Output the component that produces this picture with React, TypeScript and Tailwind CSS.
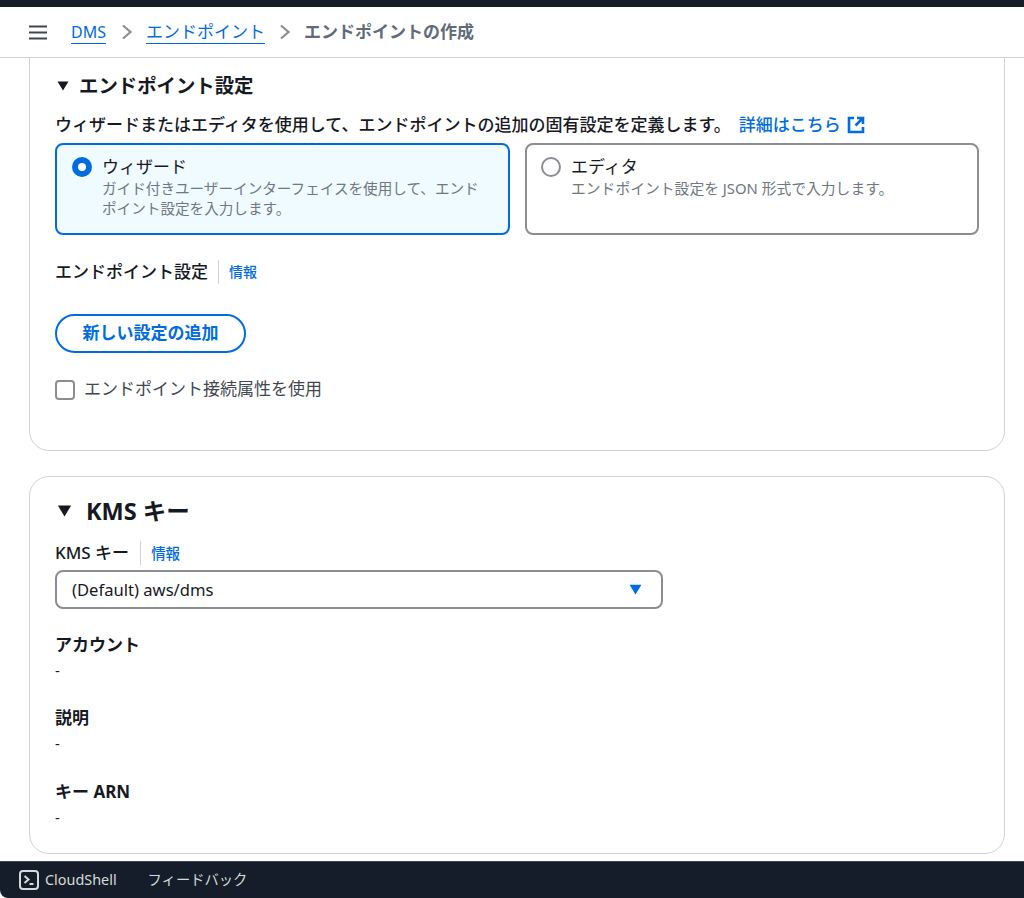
import React from "react";

const FONT = "font-['Noto_Sans','Noto_Sans_CJK_JP',sans-serif]";

function Caret({ className }: { className: string }) {
  return (
    <svg viewBox="0 0 12 10" className={className} fill="currentColor" aria-hidden="true">
      <path d="M0.5 0.5h11L6 9.5z" />
    </svg>
  );
}

function Chevron() {
  return (
    <svg viewBox="0 0 12 16" className="w-[12px] h-[16px] text-[#8c8c94]" fill="none" stroke="currentColor" strokeWidth="2.2" aria-hidden="true">
      <path d="M2 1.5l7.5 6.5L2 14.5" />
    </svg>
  );
}

function Field({ label, mt }: { label: string; mt: string }) {
  return (
    <div className={mt}>
      <div className="text-[17px] leading-[20px] font-bold text-[#16191f]">{label}</div>
      <div className="mt-[5px] text-[15px] leading-[20px] text-[#16191f]">-</div>
    </div>
  );
}

export default function App() {
  return (
    <div className={`${FONT} h-screen w-full flex flex-col overflow-hidden bg-white text-[#16191f]`}>
      <div className="h-[7px] shrink-0 bg-[#161d2a]" />
      <header className="h-[51px] shrink-0 flex items-center bg-white border-b border-[#d0d1d6] pl-[29px]">
        <svg viewBox="0 0 18 15" className="w-[18px] h-[15px] text-[#414750]" fill="none" stroke="currentColor" strokeWidth="2.2" aria-hidden="true">
          <path d="M0 1.5h18M0 7.5h18M0 13.5h18" />
        </svg>
        <a className="ml-[24px] text-[16px] leading-[22px] text-[#006ce0] border-b border-[#006ce0]">DMS</a>
        <span className="ml-[15px] mr-[13px] flex"><Chevron /></span>
        <a className="text-[17px] leading-[22px] text-[#006ce0] border-b border-[#006ce0]">エンドポイント</a>
        <span className="ml-[14px] mr-[13px] flex"><Chevron /></span>
        <span className="text-[17px] leading-[22px] font-bold text-[#5f6b7a]">エンドポイントの作成</span>
      </header>

      <main className="flex-1 min-h-0 overflow-hidden bg-white pl-[29px] pr-[19px]">
        <section className="-mt-[30px] h-[423px] border border-[#d0d1d6] rounded-[20px] px-[25px] pt-[45px]">
          <div className="flex items-center">
            <Caret className="ml-[2px] w-[12px] h-[10px] text-[#16191f]" />
            <h2 className="ml-[10px] text-[19.4px] leading-[24px] font-bold">エンドポイント設定</h2>
          </div>
          <p className="mt-[15px] text-[17px] leading-[24px] font-medium flex items-center whitespace-nowrap">
            <span>ウィザードまたはエディタを使用して、エンドポイントの追加の固有設定を定義します。</span>
            <a className="ml-[8px] font-medium text-[#006ce0]">詳細はこちら</a>
            <svg viewBox="0 0 18 18" className="ml-[6px] w-[18px] h-[18px] text-[#006ce0]" fill="none" stroke="currentColor" strokeWidth="2.6" aria-hidden="true">
              <path d="M7 2H2v14h14v-5M10 2h6v6M16 2L8.5 9.5" />
            </svg>
          </p>
          <div className="mt-[6px] flex gap-[15px]">
            <div className="w-[455px] h-[92px] shrink-0 flex rounded-[8px] border-2 border-[#006ce0] bg-[#f0fbff] pl-[15px] pt-[12px]">
              <span className="w-[20px] h-[20px] shrink-0 rounded-full border-[6px] border-[#006ce0] bg-white" />
              <div className="ml-[10px]">
                <div className="text-[17px] leading-[20px] text-[#16191f]">ウィザード</div>
                <div className="mt-[1px] w-[390px] text-[14.6px] leading-[20px] text-[#6f7780]">ガイド付きユーザーインターフェイスを使用して、エンドポイント設定を入力します。</div>
              </div>
            </div>
            <div className="flex-1 h-[92px] flex rounded-[8px] border-2 border-[#8c8c94] bg-white pl-[14px] pt-[12px]">
              <span className="w-[20px] h-[20px] shrink-0 rounded-full border-2 border-[#8c8c94] bg-white" />
              <div className="ml-[10px]">
                <div className="text-[17px] leading-[20px] text-[#16191f]">エディタ</div>
                <div className="mt-[1px] text-[14.8px] leading-[20px] text-[#6f7780]">エンドポイント設定を JSON 形式で入力します。</div>
              </div>
            </div>
          </div>
          <div className="mt-[25px] flex items-center h-[24px]">
            <span className="text-[17px] leading-[24px] font-medium">エンドポイント設定</span>
            <span className="mx-[10px] w-px h-[24px] bg-[#d0d1d6]" />
            <a className="text-[14px] leading-[24px] font-medium text-[#006ce0]">情報</a>
          </div>
          <button className="mt-[30px] block w-[191px] h-[39px] pb-[2px] rounded-full border-2 border-[#006ce0] bg-white text-[17px] font-bold text-[#006ce0]">
            新しい設定の追加
          </button>
          <label className="mt-[25px] flex items-center h-[24px]">
            <span className="w-[20px] h-[20px] shrink-0 rounded-[4px] border-2 border-[#8c8c94] bg-white" />
            <span className="ml-[9px] -translate-y-px text-[17px] leading-[24px] text-[#414750]">エンドポイント接続属性を使用</span>
          </label>
        </section>

        <section className="mt-[25px] h-[378px] border border-[#d0d1d6] rounded-[20px] px-[25px] pt-[18px]">
          <div className="flex items-center h-[32px]">
            <Caret className="ml-[2px] w-[15px] h-[12px] text-[#16191f]" />
            <h2 className="ml-[14px] text-[23.5px] leading-[32px] font-bold">KMS キー</h2>
          </div>
          <div className="mt-[14px] flex items-center h-[24px]">
            <span className="text-[17px] leading-[24px] font-medium">KMS キー</span>
            <span className="ml-[11px] mr-[10px] w-px h-[24px] bg-[#d0d1d6]" />
            <a className="text-[14.5px] leading-[24px] font-medium text-[#006ce0]">情報</a>
          </div>
          <div className="mt-[5px] w-[608px] h-[39px] flex items-center rounded-[8px] border-2 border-[#8c8c94] bg-white pl-[15px] pr-[19px]">
            <span className="flex-1 text-[16.6px] leading-[22px] text-[#16191f]">(Default) aws/dms</span>
            <Caret className="w-[13px] h-[11px] text-[#006ce0]" />
          </div>
          <Field label="アカウント" mt="mt-[26px]" />
          <Field label="説明" mt="mt-[28px]" />
          <Field label="キー ARN" mt="mt-[29px]" />
        </section>
      </main>

      <footer className="h-[37px] shrink-0 flex items-center bg-[#161d2a] rounded-bl-[8px] border-t border-[#414750] pl-[19px] text-[#d5dbdb]">
        <svg viewBox="0 0 20 20" className="w-[20px] h-[20px]" fill="none" stroke="currentColor" strokeWidth="2" aria-hidden="true">
          <rect x="1" y="1" width="18" height="18" rx="3" />
          <path d="M5.5 6l4 3.5-4 3.5M10.5 14h4" />
        </svg>
        <span className="ml-[6px] text-[14.4px] leading-[20px]">CloudShell</span>
        <span className="ml-[31px] text-[14.3px] leading-[20px]">フィードバック</span>
      </footer>
    </div>
  );
}
